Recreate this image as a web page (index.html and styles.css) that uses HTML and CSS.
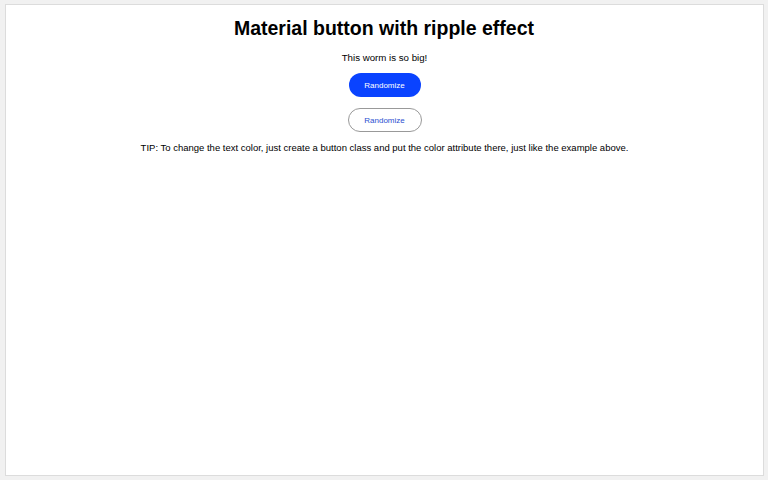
FILE: index.html
```html
<!DOCTYPE html>
<html>
<head>
<meta charset="utf-8">
<link rel="stylesheet" href="styles.css">
</head>
<body>
<div class="frame">
  <h1 class="title">Material button with ripple effect</h1>
  <p class="lead">This worm is so big!</p>
  <button class="btn btn-filled">Randomize</button>
  <button class="btn btn-outline">Randomize</button>
  <p class="tip">TIP: To change the text color, just create a button class and put the color attribute there, just like the example above.</p>
</div>
</body>
</html>
```
FILE: styles.css
```css
html, body {
  margin: 0;
  padding: 0;
  background: #f1f1f1;
}
body {
  padding: 4px 4px 4px 5px;
  height: 480px;
  box-sizing: border-box;
  font-family: "Liberation Sans", Arial, sans-serif;
}
.frame {
  background: #fff;
  border: 1px solid #dcdcdc;
  height: 100%;
  box-sizing: border-box;
  display: flex;
  flex-direction: column;
  align-items: center;
  color: #000;
}
.title {
  font-size: 19.5px;
  font-weight: bold;
  margin: 11px 0 0 -1px;
  line-height: 24px;
}
.lead {
  font-size: 9.7px;
  margin: 12px 0 0;
  line-height: 12px;
}
.btn {
  font-family: "Liberation Sans", Arial, sans-serif;
  font-size: 8px;
  border-radius: 12px;
  height: 24px;
  padding: 0 14px;
  cursor: pointer;
}
.btn-filled {
  background: #0a43ff;
  color: #fff;
  border: none;
  width: 72px;
  margin-top: 9px;
}
.btn-outline {
  background: #fff;
  color: #2b4fd0;
  border: 1px solid #999;
  width: 74px;
  margin-top: 11px;
}
.tip {
  font-size: 9.5px;
  line-height: 12px;
  margin: 10px 0 0;
}
```
